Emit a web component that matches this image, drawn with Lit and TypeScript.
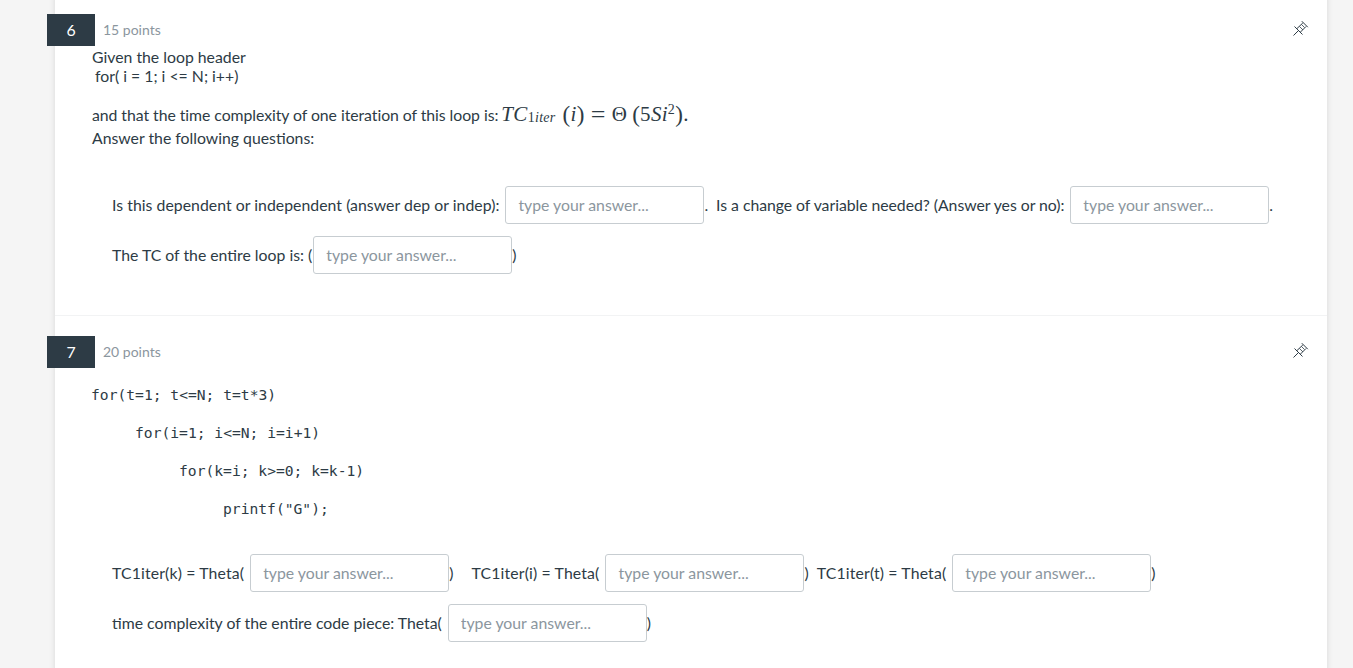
import { LitElement, css, html } from 'lit';
import { customElement, property } from 'lit/decorators.js';

const pin = html`<svg width="18" height="18" viewBox="0 0 18 18" fill="none" stroke="#2d3b45" stroke-width="1">
  <path d="M1.5 16.5 L6 12" />
  <path d="M2.5 7.5 L10.5 15.5" />
  <path d="M9.8 2.2 L15.8 8.2" />
  <path d="M5 9.5 L10.8 4 M8.5 13 L14 7.5" />
  <path d="M7.5 7.5 L11 11 M9.5 5.5 L12.5 8.5" stroke-width="0.8" />
</svg>`;

@customElement('answer-box')
export class AnswerBox extends LitElement {
  static styles = css`
    :host {
      display: block;
      flex: none;
    }

    input {
      display: block;
      box-sizing: border-box;
      width: 199px;
      height: 38px;
      padding: 0 12px 2px;
      font: 15.8px/20px Lato, sans-serif;
      color: #2d3b45;
      background: #fff;
      border: 1px solid #c7cdd1;
      border-radius: 3px;
      outline: none;
    }

    input::placeholder {
      color: #8b969e;
      opacity: 1;
    }
  `;

  render() {
    return html`<input type="text" placeholder="type your answer..." />`;
  }
}

@customElement('quiz-question')
export class QuizQuestion extends LitElement {
  @property({ type: Number }) num = 0;
  @property({ type: Number }) points = 0;

  static styles = css`
    :host {
      display: block;
      padding-top: 20px;
      color: #2d3b45;
    }

    .head {
      display: flex;
      align-items: center;
      height: 32px;
      margin-left: -8px;
      padding-right: 17px;
    }

    .badge {
      width: 48px;
      line-height: 32px;
      text-align: center;
      color: #fff;
      background: #2d3b45;
      font-size: 15.9px;
    }

    .points {
      flex: 1;
      margin: -2px 0 0 8px;
      font-size: 14px;
      color: #8b969e;
    }

    .pin {
      display: flex;
      margin-top: -4px;
    }

    .body {
      padding: 0 37px;
    }
  `;

  render() {
    return html`
      <div class="head">
        <div class="badge">${this.num}</div>
        <div class="points">${this.points} points</div>
        <div class="pin">${pin}</div>
      </div>
      <div class="body"><slot></slot></div>
    `;
  }
}

@customElement('app-root')
export class AppRoot extends LitElement {
  static styles = css`
    :host {
      display: block;
      height: 668px;
      overflow: hidden;
      background: #f5f5f5;
      font-family: Lato, 'Liberation Sans', sans-serif;
      font-size: 15.8px;
      line-height: 19px;
      color: #2d3b45;
    }

    .page {
      width: 1272px;
      height: 680px;
      margin-left: 55px;
      background: #fff;
      box-shadow: 0 0 6px rgba(0, 0, 0, 0.12);
    }

    .first {
      height: 301px;
      margin-top: -6px;
      border-bottom: 1px solid #f2f3f4;
    }

    p {
      margin: 0;
    }

    .intro {
      padding-top: 1px;
    }

    .indent {
      padding-left: 3px;
    }

    .math-line {
      display: flex;
      align-items: center;
      height: 26px;
      margin: 16px 0 1px;
      white-space: pre;
    }

    .math-text {
      letter-spacing: -0.05px;
    }

    .math {
      display: flex;
      align-items: center;
      margin-left: 3px;
      font-family: 'Liberation Serif', serif;
      font-size: 21px;
      letter-spacing: 0.3px;
    }

    .math i {
      font-style: italic;
    }

    .math .sub {
      margin: 7px 7px 0 0;
      font-size: 14px;
    }

    .math .sup {
      margin: -9px 0 0 0;
      font-size: 14px;
    }

    .math .op {
      margin: 0 6px;
      font-size: 26px;
    }

    .math .big {
      font-size: 23px;
    }

    .math .after-theta {
      margin-left: 5px;
    }

    .fill {
      display: flex;
      align-items: center;
      height: 38px;
      margin: 0 0 12px 20px;
      white-space: pre;
    }

    .fill answer-box {
      margin: 2px 0 0 6px;
    }

    .fill answer-box.tight {
      margin-left: 1px;
    }

    .fill .tc {
      letter-spacing: 0.15px;
    }

    .fill .next {
      margin-left: 2px;
    }

    .fill .wider {
      letter-spacing: 0.04px;
    }

    .fill .narrower {
      letter-spacing: -0.04px;
    }

    .answers {
      margin-top: 38px;
    }

    pre {
      margin: 0;
      height: 38px;
      font-family: 'DejaVu Sans Mono', monospace;
      font-size: 14.65px;
      line-height: 22px;
    }

    .code {
      margin: 16px 0 0 -1px;
    }

    .l1 {
      padding-left: 44px;
    }

    .l2 {
      padding-left: 88px;
    }

    .l3 {
      padding-left: 132px;
    }

    .answers-code {
      margin-top: 17px;
    }
  `;

  render() {
    return html`
      <div class="page">
        <quiz-question class="first" num="6" points="15">
          <p class="intro">Given the loop header</p>
          <p class="indent">for( i = 1; i &lt;= N; i++)</p>
          <div class="math-line"><span class="math-text">and that the time complexity of one iteration of this loop is:</span><span class="math"><i>TC</i><span class="sub">1<i>iter</i></span><span class="big">(</span><i>i</i><span class="big">)</span><span class="op">=</span>Θ<span class="big after-theta">(</span>5<i>Si</i><span class="sup">2</span><span class="big">)</span>.</span></div>
          <p>Answer the following questions:</p>
          <div class="answers">
            <div class="fill"><span class="wider">Is this dependent or independent (answer dep or indep):</span><answer-box></answer-box><span class="narrower">.&nbsp;&nbsp;Is a change of variable needed? (Answer yes or no):</span><answer-box></answer-box>.</div>
            <div class="fill">The TC of the entire loop is: (<answer-box class="tight"></answer-box>)</div>
          </div>
        </quiz-question>
        <quiz-question num="7" points="20">
          <div class="code">
            <pre>for(t=1; t&lt;=N; t=t*3)</pre>
            <pre class="l1">for(i=1; i&lt;=N; i=i+1)</pre>
            <pre class="l2">for(k=i; k&gt;=0; k=k-1)</pre>
            <pre class="l3">printf("G");</pre>
          </div>
          <div class="answers-code">
            <div class="fill"><span class="tc">TC1iter(k) = Theta(</span><answer-box></answer-box>)&nbsp;&nbsp;&nbsp;&nbsp;<span class="tc next">TC1iter(i) = Theta(</span><answer-box></answer-box>)&nbsp;&nbsp;<span class="tc">TC1iter(t) = Theta(</span><answer-box></answer-box>)</div>
            <div class="fill">time complexity of the entire code piece: Theta(<answer-box></answer-box>)</div>
          </div>
        </quiz-question>
      </div>
    `;
  }
}
